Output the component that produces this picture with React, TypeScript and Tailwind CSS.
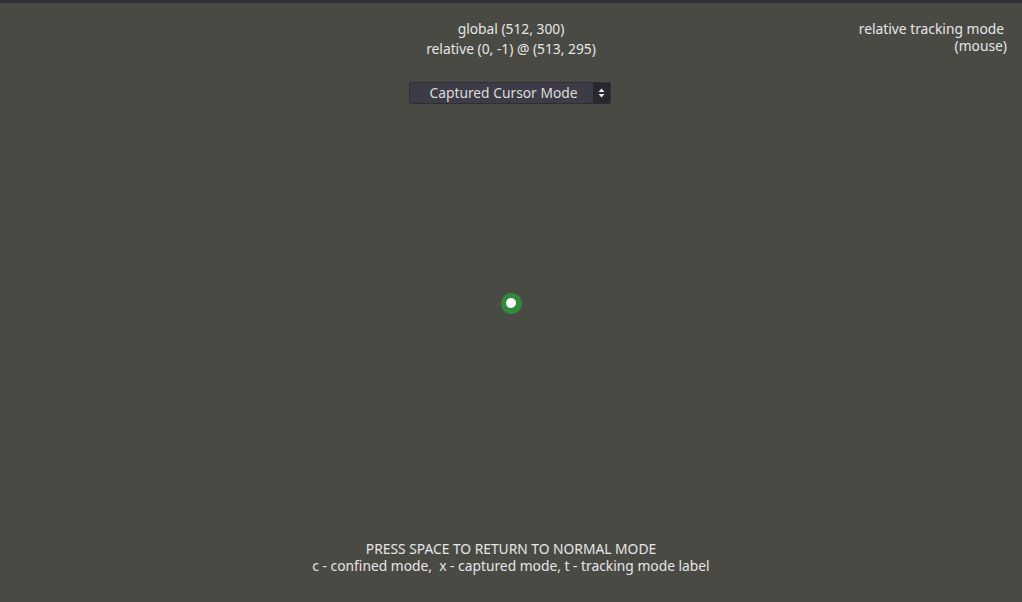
import React from "react";

export default function App() {
  return (
    <div
      className="w-[1022px] h-[602px] bg-[#4a4a45] flex flex-col relative overflow-hidden text-[#e6e6e6] text-[13.8px]"
      style={{ fontFamily: '"Noto Sans", "Open Sans", sans-serif' }}
    >
      <div className="h-[3px] bg-[#2f3139] shrink-0" />
      <div className="flex flex-1 flex-col items-center">
        <div className="flex flex-col items-center pt-[16px] leading-[20px]">
          <div>global (512, 300)</div>
          <div>relative (0, -1) @ (513, 295)</div>
        </div>
        <div className="mt-[23px] ml-[-2px] flex h-[22px] w-[202px] rounded-[2px] overflow-hidden border border-[#2f2e36]">
          <div className="flex-1 bg-[#3c3b46] flex items-center justify-center pl-[4px] text-[#dcdcdc]">
            Captured Cursor Mode
          </div>
          <div className="w-[17px] bg-[#27272d] flex items-center justify-center">
            <svg width="7" height="10" viewBox="0 0 7 10">
              <path d="M3.5 0.5 L6.5 4 L0.5 4 Z" fill="#e6e6e6" />
              <path d="M3.5 9.5 L6.5 6 L0.5 6 Z" fill="#e6e6e6" />
            </svg>
          </div>
        </div>
        <div className="flex-1 flex items-center justify-center">
          <div className="mt-[-38px] w-[21px] h-[21px] rounded-full bg-[#2f8a3d] flex items-center justify-center">
            <div className="w-[10px] h-[10px] rounded-full bg-white" />
          </div>
        </div>
        <div className="flex flex-col items-center leading-[17px] pb-[28px]">
          <div>PRESS SPACE TO RETURN TO NORMAL MODE</div>
          <div>c - confined mode,&nbsp; x - captured mode, t - tracking mode label</div>
        </div>
      </div>
      <div className="absolute right-[15px] top-[20px] flex flex-col items-end leading-[17px]">
        <div className="pr-[3px]">relative tracking mode</div>
        <div>(mouse)</div>
      </div>
    </div>
  );
}
